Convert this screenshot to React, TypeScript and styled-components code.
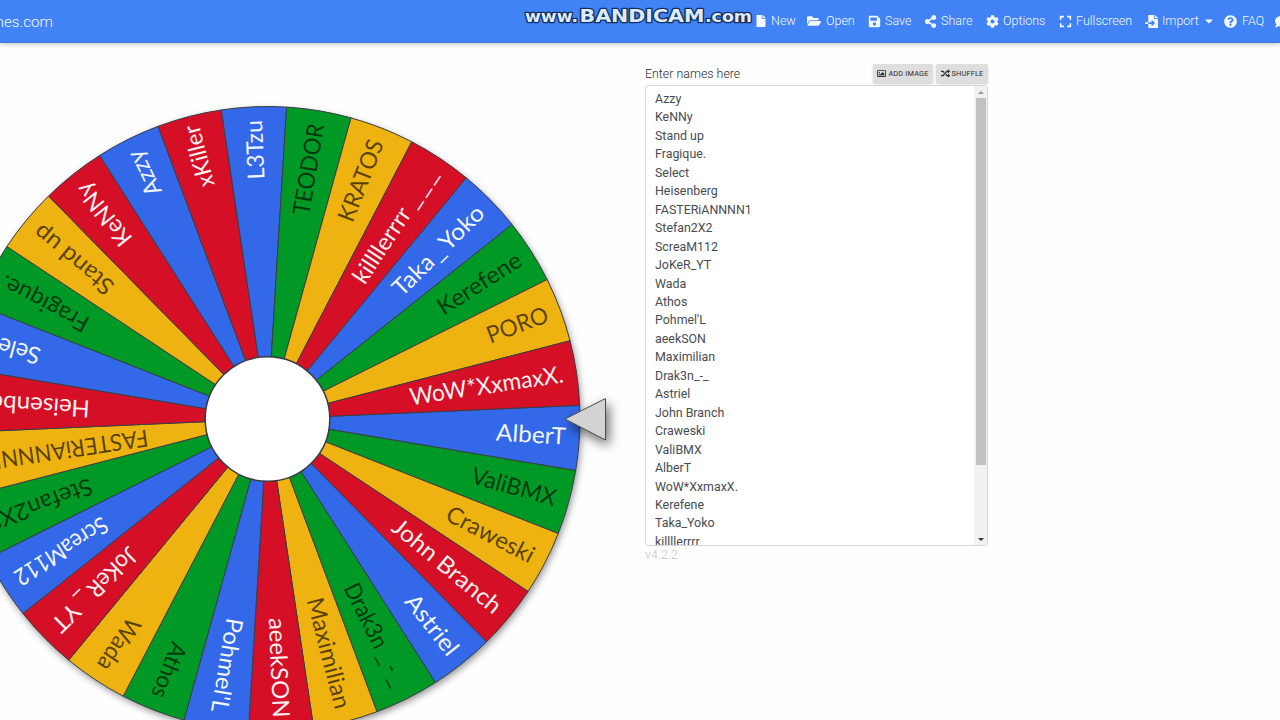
import React from 'react';
import styled, { createGlobalStyle } from 'styled-components';
import {
  FaFile, FaFolderOpen, FaSave, FaShareAlt, FaCog, FaExpand, FaFileImport,
  FaQuestionCircle, FaComment, FaRegImage, FaRandom, FaCaretDown,
} from 'react-icons/fa';

const GlobalStyle = createGlobalStyle`
  *, *::before, *::after { box-sizing: border-box; }
  html, body { margin: 0; padding: 0; background: #fefefe; overflow: hidden; }
  body { font-family: Roboto, 'Liberation Sans', sans-serif; }
`;

const Page = styled.div`
  width: 1280px;
  height: 720px;
  overflow: hidden;
  display: flex;
  flex-direction: column;
`;

const Header = styled.header`
  position: relative;
  z-index: 2;
  flex: none;
  height: 43px;
  display: flex;
  align-items: center;
  justify-content: space-between;
  background: #4182f4;
  border-bottom: 1px solid #3f77d6;
  color: #f4f9ff;
  box-shadow: 0 1px 5px rgba(0, 0, 0, 0.25);
`;

const Brand = styled.div`
  width: 53px;
  padding-top: 1px;
  display: flex;
  justify-content: flex-end;
  overflow: hidden;
  font-size: 15.2px;
  line-height: 22px;
  font-weight: 300;
  white-space: nowrap;
`;

const Nav = styled.nav`
  width: 525px;
  height: 100%;
  display: flex;
  align-items: center;
  overflow: hidden;
`;

const NavItem = styled.a<{ $width: number }>`
  flex: 0 0 ${(p) => p.$width}px;
  display: flex;
  align-items: center;
  font-size: 12.5px;
  line-height: 18px;
  font-weight: 300;
  white-space: nowrap;
`;

const NavIcon = styled.span<{ $width: number }>`
  flex: 0 0 ${(p) => p.$width}px;
  display: flex;
  svg { display: block; }
`;

const Caret = styled.span`
  display: flex;
  margin-left: 4px;
`;

const Watermark = styled.svg`
  position: absolute;
  left: 518px;
  top: 0;
`;

const Main = styled.main`
  flex: 1;
  min-height: 0;
  display: flex;
`;

const WheelCanvas = styled.svg`
  flex: none;
  display: block;
  width: 621px;
  height: 677px;
`;

const SliceLabel = styled.text`
  font-family: Lato, 'Open Sans', sans-serif;
  font-size: 23.5px;
`;

const Panel = styled.section`
  width: 343px;
  margin-left: 24px;
  padding-top: 21px;
`;

const PanelHead = styled.div`
  height: 19px;
  display: flex;
  align-items: center;
  justify-content: space-between;
`;

const Label = styled.label`
  font-size: 12.4px;
  font-weight: 300;
  letter-spacing: 0;
  color: #2c2c2c;
`;

const Buttons = styled.div`
  display: flex;
  gap: 3px;
`;

const SmallButton = styled.button<{ $width: number }>`
  width: ${(p) => p.$width}px;
  height: 19px;
  padding: 0;
  display: flex;
  align-items: center;
  justify-content: center;
  gap: 2px;
  border: 0;
  border-radius: 2px;
  background: #dedede;
  box-shadow: 0 1px 2px rgba(0, 0, 0, 0.2);
  font-family: Roboto, sans-serif;
  font-size: 7.4px;
  letter-spacing: 0.15px;
  color: #2b2b2b;
  white-space: nowrap;
`;

const NamesBox = styled.div`
  width: 343px;
  height: 461px;
  margin-top: 2px;
  display: flex;
  border: 1px solid #d5d7da;
  border-radius: 3px;
  background: #fff;
  overflow: hidden;
`;

const NamesList = styled.div`
  flex: 1;
  padding: 4px 9px 0;
`;

const NameRow = styled.div`
  height: 18.46px;
  font-size: 12.4px;
  line-height: 18.46px;
  color: #474c51;
  white-space: pre;
`;

const ScrollTrack = styled.div`
  width: 13px;
  display: flex;
  flex-direction: column;
  align-items: center;
  background: #f1f1f1;
`;

const ScrollThumb = styled.div`
  width: 10px;
  height: 367px;
  background: #c1c1c1;
`;

const ScrollArrow = styled.div<{ $down?: boolean }>`
  height: 12px;
  margin-top: ${(p) => (p.$down ? 'auto' : '0')};
  display: flex;
  align-items: center;
`;

const Version = styled.div`
  padding-top: 2px;
  font-size: 12.2px;
  line-height: 15px;
  font-weight: 300;
  letter-spacing: 0.15px;
  color: #c4c4c4;
`;

const RED = '#d50f25';
const BLUE = '#3369e8';
const GREEN = '#009925';
const YELLOW = '#eeb211';

type Part = [text: string, start: number, end: number];
type Slice = { fill: string; parts: Part[] };

const one = (fill: string, text: string, start: number, end = 299): Slice => ({
  fill,
  parts: [[text, start, end]],
});

/* Slices run clockwise from the pointer; each part is placed between two radii. */
const slices: Slice[] = [
  one(BLUE, 'AlberT', 229),
  one(GREEN, 'ValiBMX', 212),
  one(YELLOW, 'Craweski', 203),
  one(RED, 'John Branch', 165),
  one(BLUE, 'Astriel', 228),
  { fill: GREEN, parts: [['Drak3n', 185, 255], ['_', 260, 272], ['-', 275, 282], ['_', 285, 297]] },
  one(YELLOW, 'Maximilian', 185),
  one(RED, 'aeekSON', 199),
  one(BLUE, "Pohmel'L", 202, 297),
  one(GREEN, 'Athos', 241),
  one(YELLOW, 'Wada', 241),
  { fill: RED, parts: [['JoKeR', 188, 248], ['_', 252, 264], ['YT', 268, 298]] },
  one(BLUE, 'ScreaM112', 192, 298),
  one(GREEN, 'Stefan2X2', 188),
  one(YELLOW, 'FASTERiANNNN1', 121),
  one(RED, 'Heisenberg', 178),
  one(BLUE, 'Select', 236),
  one(GREEN, 'Fragique.', 203),
  one(YELLOW, 'Stand up', 203),
  one(RED, 'KeNNy', 225),
  one(BLUE, 'Azzy', 251),
  one(RED, 'xKiller', 240, 303),
  one(BLUE, 'L3Tzu', 240),
  one(GREEN, 'TEODOR', 207),
  one(YELLOW, 'KRATOS', 213),
  { fill: RED, parts: [['killllerrrr', 165, 251], ['_', 256, 269], ['_', 271, 284], ['_', 286, 299]] },
  { fill: BLUE, parts: [['Taka', 181, 229], ['_', 232, 244], ['Yoko', 246, 299]] },
  one(GREEN, 'Kerefene', 204),
  one(YELLOW, 'PORO', 235),
  one(RED, 'WoW*XxmaxX.', 144),
];

const CX = 267.5;
const CY = 376;
const R = 312.5;
const START = -2.5;

const point = (deg: number) => {
  const a = (deg * Math.PI) / 180;
  return `${(CX + R * Math.cos(a)).toFixed(2)} ${(CY + R * Math.sin(a)).toFixed(2)}`;
};

function Wheel() {
  return (
    <WheelCanvas viewBox="0 0 621 677">
      <defs>
        <filter id="wheelShadow" x="-10%" y="-10%" width="120%" height="120%">
          <feDropShadow dx="1.5" dy="3" stdDeviation="3.5" floodOpacity="0.42" />
        </filter>
        <filter id="pointerShadow" x="-50%" y="-50%" width="220%" height="220%">
          <feDropShadow dx="3" dy="5" stdDeviation="6" floodOpacity="0.6" />
        </filter>
      </defs>
      <circle cx={CX} cy={CY} r={R} fill="#777" filter="url(#wheelShadow)" />
      {slices.map((s, i) => (
        <path
          key={i}
          d={`M${CX} ${CY}L${point(START + i * 12)}A${R} ${R} 0 0 1 ${point(START + (i + 1) * 12)}Z`}
          fill={s.fill}
          stroke="#3a3f46"
          strokeWidth="1"
        />
      ))}
      {slices.map((s, i) => (
        <g key={i} transform={`translate(${CX} ${CY}) rotate(${START + 6 + i * 12})`}>
          {s.parts.map(([text, start, end], j) => (
            <SliceLabel
              key={j}
              x={start}
              y={7.5}
              textLength={end - start}
              lengthAdjust="spacingAndGlyphs"
              fill={s.fill === RED || s.fill === BLUE ? '#fff' : '#000'}
              fillOpacity={s.fill === RED || s.fill === BLUE ? 0.95 : 0.64}
            >
              {text}
            </SliceLabel>
          ))}
        </g>
      ))}
      <circle cx={CX} cy={CY} r="62.3" fill="#fff" stroke="#383c40" strokeWidth="1.5" />
      <path d="M565 376L605.5 355.5V397Z" fill="#d3d3d3" stroke="#4a4a4a" strokeWidth="1" filter="url(#pointerShadow)" />
    </WheelCanvas>
  );
}

const navItems = [
  { icon: <FaFile size={12} />, label: 'New', width: 52, iconWidth: 16 },
  { icon: <FaFolderOpen size={14} />, label: 'Open', width: 61, iconWidth: 19 },
  { icon: <FaSave size={13} />, label: 'Save', width: 56, iconWidth: 17 },
  { icon: <FaShareAlt size={13} />, label: 'Share', width: 62, iconWidth: 17 },
  { icon: <FaCog size={13} />, label: 'Options', width: 73, iconWidth: 17 },
  { icon: <FaExpand size={13} />, label: 'Fullscreen', width: 86, iconWidth: 17 },
  { icon: <FaFileImport size={13} />, label: 'Import', width: 79, iconWidth: 17, caret: true },
  { icon: <FaQuestionCircle size={13} />, label: 'FAQ', width: 51, iconWidth: 18 },
  { icon: <FaComment size={13} />, label: '', width: 20, iconWidth: 16 },
];

const names = [
  'Azzy', 'KeNNy', 'Stand up', 'Fragique.', 'Select', 'Heisenberg', 'FASTERiANNNN1', 'Stefan2X2',
  'ScreaM112', 'JoKeR_YT', 'Wada', 'Athos', "Pohmel'L", 'aeekSON', 'Maximilian', 'Drak3n_-_',
  'Astriel', 'John Branch', 'Craweski', 'ValiBMX', 'AlberT', 'WoW*XxmaxX.', 'Kerefene',
  'Taka_Yoko', 'killllerrrr',
];

const MarkText = styled.text`
  font-family: 'DejaVu Sans', sans-serif;
  font-weight: 700;
  fill: #dcebff;
  stroke: #12305f;
  stroke-width: 2.6px;
  stroke-linejoin: round;
  paint-order: stroke;
`;

export default function App() {
  return (
    <Page>
      <GlobalStyle />
      <Header>
        <Brand>mes.com</Brand>
        <Nav>
          {navItems.map((n, i) => (
            <NavItem key={i} $width={n.width}>
              <NavIcon $width={n.iconWidth}>{n.icon}</NavIcon>
              {n.label}
              {n.caret && <Caret><FaCaretDown size={12} /></Caret>}
            </NavItem>
          ))}
        </Nav>
        <Watermark width="240" height="32" viewBox="0 0 240 32">
          <MarkText x="7" y="21.5" fontSize="16" textLength="53" lengthAdjust="spacingAndGlyphs">www.</MarkText>
          <MarkText x="61.5" y="21.5" fontSize="18" textLength="125" lengthAdjust="spacingAndGlyphs">BANDICAM</MarkText>
          <MarkText x="187" y="21.5" fontSize="16" textLength="47" lengthAdjust="spacingAndGlyphs">.com</MarkText>
        </Watermark>
      </Header>
      <Main>
        <Wheel />
        <Panel>
          <PanelHead>
            <Label>Enter names here</Label>
            <Buttons>
              <SmallButton $width={60}><FaRegImage size={9} />ADD IMAGE</SmallButton>
              <SmallButton $width={52}><FaRandom size={9} />SHUFFLE</SmallButton>
            </Buttons>
          </PanelHead>
          <NamesBox>
            <NamesList>
              {names.map((n) => <NameRow key={n}>{n}</NameRow>)}
            </NamesList>
            <ScrollTrack>
              <ScrollArrow>
                <svg width="6" height="3"><path d="M0 3L3 0L6 3Z" fill="#999" /></svg>
              </ScrollArrow>
              <ScrollThumb />
              <ScrollArrow $down>
                <svg width="6" height="3"><path d="M0 0L3 3L6 0Z" fill="#333" /></svg>
              </ScrollArrow>
            </ScrollTrack>
          </NamesBox>
          <Version>v4.2.2</Version>
        </Panel>
      </Main>
    </Page>
  );
}
